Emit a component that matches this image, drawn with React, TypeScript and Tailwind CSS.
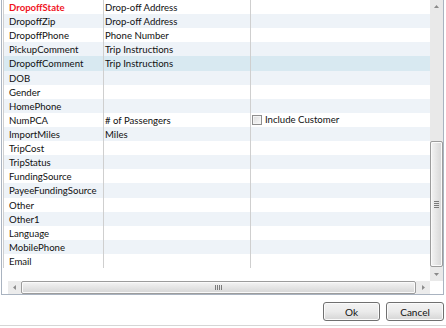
import React from "react";

type Row = {
  field: string;
  label?: string;
  bold?: boolean;
  selected?: boolean;
  checkbox?: string;
};

const rows: Row[] = [
  { field: "DropoffState", label: "Drop-off Address", bold: true },
  { field: "DropoffZip", label: "Drop-off Address" },
  { field: "DropoffPhone", label: "Phone Number" },
  { field: "PickupComment", label: "Trip Instructions" },
  { field: "DropoffComment", label: "Trip Instructions", selected: true },
  { field: "DOB" },
  { field: "Gender" },
  { field: "HomePhone" },
  { field: "NumPCA", label: "# of Passengers", checkbox: "Include Customer" },
  { field: "ImportMiles", label: "Miles" },
  { field: "TripCost" },
  { field: "TripStatus" },
  { field: "FundingSource" },
  { field: "PayeeFundingSource" },
  { field: "Other" },
  { field: "Other1" },
  { field: "Language" },
  { field: "MobilePhone" },
  { field: "Email" },
];

const Arrow = ({ dir }: { dir: "up" | "down" | "left" | "right" }) => {
  const points = {
    up: "0,4 3.5,0 7,4",
    down: "0,0 3.5,4 7,0",
    left: "4,0 0,3.5 4,7",
    right: "0,0 4,3.5 0,7",
  }[dir];
  const vertical = dir === "up" || dir === "down";
  return (
    <svg
      width={vertical ? 5 : 3}
      height={vertical ? 3 : 5}
      viewBox={vertical ? "0 0 7 4" : "0 0 4 7"}
    >
      <polygon points={points} fill="#8a8a8a" />
    </svg>
  );
};

const Button = ({ label, width }: { label: string; width: string }) => (
  <button
    className={`${width} h-[19px] rounded-[3px] border border-[#707070] bg-linear-to-b from-[#f3f3f3] via-[#ebebeb] to-[#d5d5d5] shadow-[inset_0_0_0_1px_#fbfbfb] text-[10px] leading-none text-[#111]`}
  >
    {label}
  </button>
);

export default function App() {
  return (
    <div className="w-[446px] h-[328px] bg-white overflow-hidden font-['Lato','Noto_Sans',sans-serif] text-[9.6px] text-[#111]">
      <div className="ml-[1px] w-[443px] h-[295px] border-l border-r border-b border-[#a9b3c0] flex flex-col">
        <div className="flex h-[281px]">
          <div className="w-[428px] flex flex-col">
            {rows.map((r, i) => (
              <div
                key={r.field}
                className={`flex h-[14.12px] leading-[15px] ${
                  r.selected
                    ? "bg-[#d8e9f1]"
                    : i % 2 === 1
                      ? "bg-[#eef3f8]"
                      : "bg-white"
                }`}
              >
                <div className="w-[2px] bg-white border-r border-[#cfcfcf]" />
                <div
                  className={`w-[100px] pl-[5px] border-r border-[#cfcfcf] whitespace-nowrap overflow-hidden ${
                    r.bold ? "font-bold text-[#f0141e]" : ""
                  }`}
                >
                  {r.field}
                </div>
                <div className="w-[147px] pl-[1px] border-r border-[#cfcfcf] whitespace-nowrap overflow-hidden">
                  {r.label}
                </div>
                <div className="flex-1 flex items-center pl-[1px]">
                  {r.checkbox && (
                    <>
                      <span className="w-[10px] h-[10px] border border-[#8f8f8f] bg-linear-to-br from-[#dcdcdc] to-[#fafafa] shadow-[inset_0_0_0_1px_#f4f4f4]" />
                      <span className="ml-[3px]">{r.checkbox}</span>
                    </>
                  )}
                </div>
              </div>
            ))}
          </div>
          <div className="w-[13px] flex flex-col bg-[#e9e9e9]">
            <div className="h-[12px] flex items-center justify-center">
              <Arrow dir="up" />
            </div>
            <div className="h-[129px]" />
            <div className="h-[126px] rounded-[2px] border border-[#9c9c9c] bg-linear-to-r from-[#f4f4f4] to-[#d6d6d6] shadow-[inset_0_0_0_1px_#fafafa] flex flex-col items-center justify-center gap-[1px]">
              <span className="w-[5px] h-[1px] bg-[#7a7a7a]" />
              <span className="w-[5px] h-[1px] bg-[#7a7a7a]" />
              <span className="w-[5px] h-[1px] bg-[#7a7a7a]" />
              <span className="w-[5px] h-[1px] bg-[#7a7a7a]" />
            </div>
            <div className="h-[14px] flex items-center justify-center">
              <Arrow dir="down" />
            </div>
          </div>
        </div>
        <div className="flex h-[13px]">
          <div className="w-[6px] bg-white" />
          <div className="w-[13px] bg-[#ececec] flex items-center justify-center">
            <Arrow dir="left" />
          </div>
          <div className="w-[395px] rounded-[2px] border border-[#9c9c9c] bg-linear-to-b from-[#f4f4f4] to-[#d6d6d6] shadow-[inset_0_0_0_1px_#fafafa] flex items-center justify-center gap-[1px]">
            <span className="w-[1px] h-[5px] bg-[#7a7a7a]" />
            <span className="w-[1px] h-[5px] bg-[#7a7a7a]" />
            <span className="w-[1px] h-[5px] bg-[#7a7a7a]" />
            <span className="w-[1px] h-[5px] bg-[#7a7a7a]" />
          </div>
          <div className="w-[14px] bg-[#ececec] flex items-center justify-center">
            <Arrow dir="right" />
          </div>
          <div className="w-[13px] bg-white" />
        </div>
      </div>
      <div className="flex justify-end gap-[6px] pr-[2px] mt-[7px]">
        <Button label="Ok" width="w-[57px]" />
        <Button label="Cancel" width="w-[58px]" />
      </div>
      <div className="mt-[4px] h-[1px] bg-[#d6d6d6]" />
    </div>
  );
}
